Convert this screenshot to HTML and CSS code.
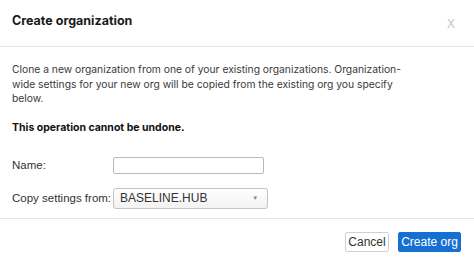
FILE: index.html
```html
<!DOCTYPE html>
<html lang="en">
<head>
    <meta charset="UTF-8">
    <title>Create organization</title>
    <link rel="stylesheet" href="styles.css">
</head>
<body>
    <div class="modal">
        <div class="modal-header">
            <span class="modal-title">Create organization</span>
            <span class="modal-close">X</span>
        </div>
        <div class="modal-body">
            <p class="intro">Clone a new organization from one of your existing organizations. Organization-wide settings for your new org will be copied from the existing org you specify below.</p>
            <p class="warning">This operation cannot be undone.</p>
            <div class="form">
                <label class="form-label" for="orgName">Name:</label>
                <input class="form-input" id="orgName" type="text">
                <label class="form-label" for="copyFrom">Copy settings from:</label>
                <div class="form-select" id="copyFrom">
                    <span>BASELINE.HUB</span>
                    <span class="caret">▼</span>
                </div>
            </div>
        </div>
        <div class="modal-footer">
            <button class="btn btn-cancel">Cancel</button>
            <button class="btn btn-primary">Create org</button>
        </div>
    </div>
</body>
</html>
```

FILE: styles.css
```css
body {
    margin: 0;
    background-color: #fff;
    color: #222;
    font-family: 'Inter', 'Liberation Sans', sans-serif;
}

.modal {
    width: 474px;
    height: 264px;
    display: flex;
    flex-direction: column;
}

.modal-header {
    height: 47px;
    flex-shrink: 0;
    padding: 0 12px;
    display: flex;
    align-items: center;
    justify-content: space-between;
    border-bottom: 1px solid #e5e5e5;
    box-sizing: border-box;
}

.modal-title {
    font-size: 12.5px;
    font-weight: 700;
    color: #1a1a1a;
    margin-top: -6px;
}

.modal-close {
    font-family: 'Liberation Sans', sans-serif;
    font-size: 12px;
    color: #c4c4c4;
    margin-right: 7px;
    margin-top: 2px;
}

.modal-body {
    padding: 15px 12px 0;
    flex: 1;
    border-bottom: 1px solid #e5e5e5;
}

.intro {
    margin: 0;
    font-size: 10.3px;
    line-height: 14.5px;
    color: #3a3a3a;
    width: 400px;
}

.warning {
    margin: 15px 0 0;
    font-size: 10.5px;
    font-weight: 700;
    color: #111;
}

.form {
    display: grid;
    grid-template-columns: auto auto;
    align-items: center;
    column-gap: 2px;
    row-gap: 14px;
    margin-top: 23px;
    justify-content: start;
}

.form-label {
    font-family: 'Liberation Sans', sans-serif;
    font-size: 11.5px;
    color: #333;
    white-space: nowrap;
}

.form-input {
    width: 151px;
    height: 17px;
    box-sizing: border-box;
    border: 1px solid #b8b8b8;
    border-radius: 2px;
    margin: 0;
}

.form-select {
    width: 155px;
    height: 21px;
    box-sizing: border-box;
    border: 1px solid #c4c4c4;
    border-radius: 3px;
    background: linear-gradient(#fff, #f2f2f2);
    display: flex;
    align-items: center;
    justify-content: space-between;
    padding: 0 9px 0 6px;
    font-family: 'Liberation Sans', sans-serif;
    font-size: 12px;
    color: #333;
}

.caret {
    font-size: 6px;
    color: #888;
}

.modal-footer {
    height: 45px;
    flex-shrink: 0;
    display: flex;
    justify-content: flex-end;
    align-items: center;
    gap: 9px;
    padding-right: 13px;
    box-sizing: border-box;
}

.btn {
    height: 20px;
    padding: 0;
    font-family: 'Liberation Sans', sans-serif;
    font-size: 12px;
    border-radius: 2px;
    white-space: nowrap;
    cursor: pointer;
}

.btn-cancel {
    background-color: #fff;
    border: 1px solid #d0d0d0;
    color: #333;
    width: 44px;
}

.btn-primary {
    background-color: #1570d1;
    border: 1px solid #1570d1;
    color: #fff;
    width: 63px;
}
```
